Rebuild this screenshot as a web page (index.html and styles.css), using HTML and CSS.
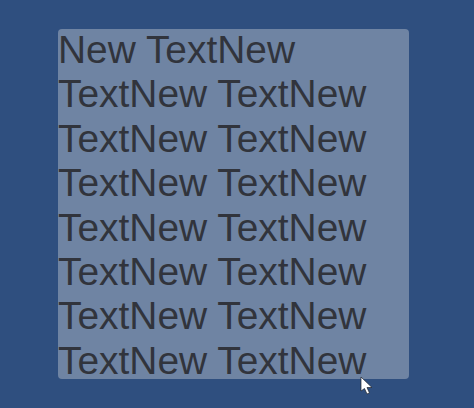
FILE: index.html
```
<!DOCTYPE html>
<html lang="en">
<head>
    <meta charset="UTF-8">
    <title>New Text</title>
    <link rel="stylesheet" href="styles.css">
</head>
<body>
    <div class="panel">
        <p class="panel-text">New TextNew TextNew TextNew TextNew TextNew TextNew TextNew TextNew TextNew TextNew TextNew TextNew TextNew TextNew TextNew</p>
    </div>
    <svg class="cursor" width="14" height="22" viewBox="0 0 14 22">
        <path d="M1 1 L1 15 L4.5 12.5 L7 18 L9.5 17 L7 11.5 L12 11.5 Z" fill="#fff" stroke="#20242c" stroke-width="0.7"/>
    </svg>
</body>
</html>
```

FILE: styles.css
```
body {
    margin: 0;
    padding: 29px 0 0 58px;
    box-sizing: border-box;
    width: 474px;
    height: 408px;
    overflow: hidden;
    background-color: #2f4f7f;
    position: relative;
}

.panel {
    width: 351px;
    height: 350px;
    background-color: #6f84a3;
    border-radius: 4px;
}

.panel-text {
    margin: 0;
    font-family: "Liberation Sans", Arial, sans-serif;
    font-size: 38.9px;
    line-height: 44.4px;
    color: #31343c;
    transform: translateY(-1px);
}

.cursor {
    position: absolute;
    left: 360px;
    top: 376px;
}
```
